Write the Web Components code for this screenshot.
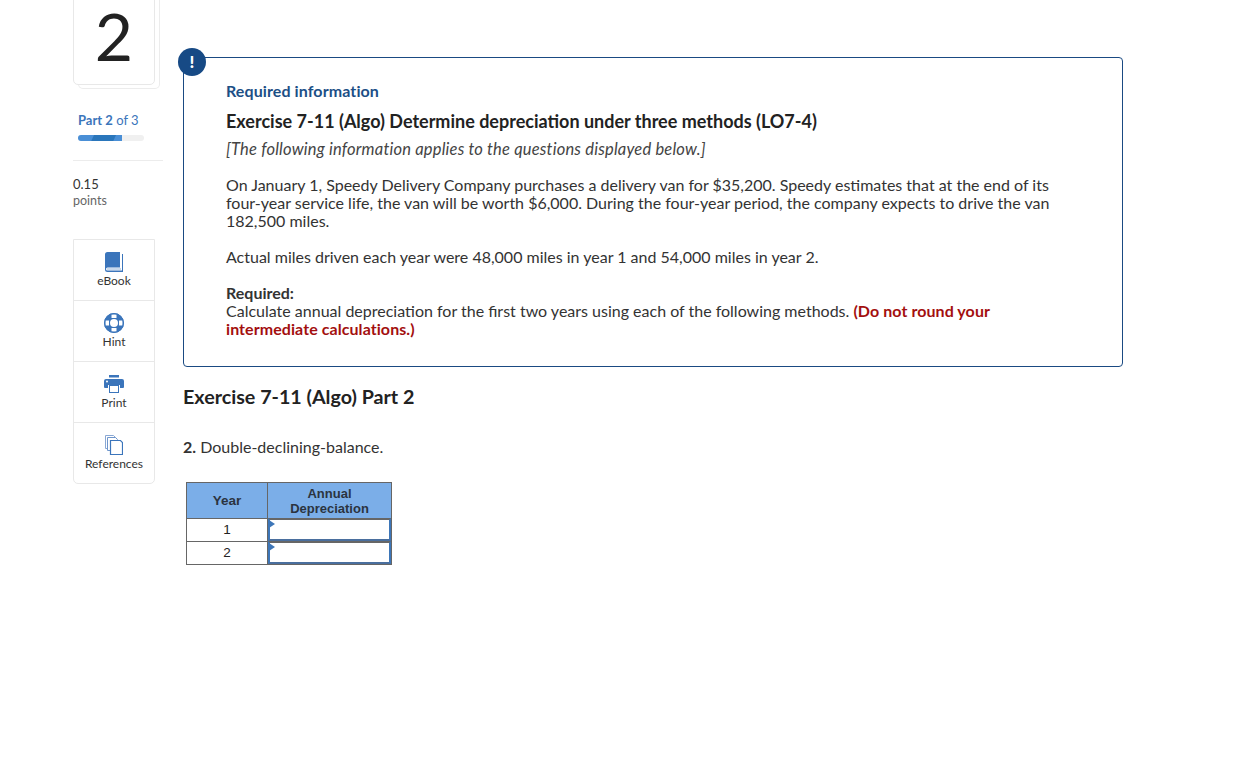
<!DOCTYPE html>
<html>
<head>
<meta charset="utf-8">
<title>Exercise 7-11</title>
<style>
    html, body { margin: 0; background: #fff; height: 100%; overflow: hidden; }
    body { font-family: Lato, "Open Sans", sans-serif; color: #222; }
    .warn { color: #a30f0f; letter-spacing: .07px; }
</style>
</head>
<body>
<quiz-page>
    <quiz-sidebar slot="side" number="2">
        <tool-item label="eBook">
            <svg width="18" height="20" viewBox="0 0 18 20"><path d="M2.500 0H15v15.500H2.500a1.500 1.500 0 0 0 0 3H17V2h1v18H2.500A2.500 2.500 0 0 1 0 17.500v-15A2.500 2.500 0 0 1 2.500 0z" fill="#3b75bb"/><path d="M2 16.500h14v1H2z" fill="#3b75bb" opacity=".55"/></svg>
        </tool-item>
        <tool-item label="Hint">
            <svg width="20" height="20" viewBox="0 0 20 20"><circle cx="10" cy="10" r="7" fill="none" stroke="#3b75bb" stroke-width="6"/><path d="M7.500 1.500h5v3.500h-5zM7.500 15h5v3.500h-5zM1.500 7.500H5v5H1.500zM15 7.500h3.500v5H15z" fill="#fff"/><circle cx="10" cy="10" r="9.500" fill="none" stroke="#3b75bb"/></svg>
        </tool-item>
        <tool-item label="Print">
            <svg width="20" height="18" viewBox="0 0 20 18"><path d="M5 0h10v2.500H5z" fill="#3b75bb"/><path d="M2 4h16a2 2 0 0 1 2 2v6a1 1 0 0 1-1 1h-3v-3H4v3H1a1 1 0 0 1-1-1V6a2 2 0 0 1 2-2z" fill="#3b75bb"/><circle cx="3" cy="6.500" r="1" fill="#fff"/><rect x="5.500" y="10.500" width="9" height="7" fill="#fff" stroke="#3b75bb"/></svg>
        </tool-item>
        <tool-item label="References">
            <svg width="18" height="20" viewBox="0 0 18 20" fill="#fff" stroke="#3b75bb"><path d="M.5.500h8l2 2v11H.5z" stroke="#8aa8d4"/><path d="M2.500 2.500h8l2 2v11h-10z" stroke="#6f96cc"/><path d="M5.500 5.500h10l2 2v12h-12z" stroke-width="1.200"/></svg>
        </tool-item>
    </quiz-sidebar>
    <info-box slot="main">
        <div slot="eyebrow">Required information</div>
        <span slot="title">Exercise 7-11 (Algo) Determine depreciation under three methods (LO7-4)</span>
        <span slot="note">[The following information applies to the questions displayed below.]</span>
        <p>On January 1, Speedy Delivery Company purchases a delivery van for $35,200. Speedy estimates that at the end of its four-year service life, the van will be worth $6,000. During the four-year period, the company expects to drive the van 182,500 miles.</p>
        <p>Actual miles driven each year were 48,000 miles in year 1 and 54,000 miles in year 2.</p>
        <p><b>Required:</b><br>Calculate annual depreciation for the first two years using each of the following methods. <b class="warn">(Do not round your<br>intermediate calculations.)</b></p>
    </info-box>
    <question-part slot="main" heading="Exercise 7-11 (Algo) Part 2">
        <span><b>2.</b> Double-declining-balance.</span>
    </question-part>
</quiz-page>

<script>
const html = String.raw;

class QuizPage extends HTMLElement {
    connectedCallback() {
        this.attachShadow({ mode: 'open' }).innerHTML = html`
            <style>
                :host { display: flex; padding-left: 73px; }
                .side { width: 90px; flex: none; }
                .main { width: 940px; margin-left: 20px; padding-top: 57px; }
            </style>
            <div class="side"><slot name="side"></slot></div>
            <div class="main"><slot name="main"></slot></div>
        `;
    }
}

class QuizSidebar extends HTMLElement {
    connectedCallback() {
        this.attachShadow({ mode: 'open' }).innerHTML = html`
            <style>
                :host { display: block; }
                /* the card is scrolled partly out of view, so it starts above the top edge */
                .num {
                    box-sizing: border-box; width: 82px; height: 95px; margin-top: -10px;
                    border: 1px solid #e8e8e8; border-radius: 0 0 5px 5px; background: #fff;
                    box-shadow: 5px 4px 0 -1px #fff, 5px 4px 0 0 #ececec;
                    font: 400 66px/90px Lato, sans-serif; color: #222; text-align: center;
                }
                .part { margin: 27px 0 0 5px; font-size: 13px; line-height: 16px; color: #3b75bb; }
                .bar { margin: 7px 0 0 5px; width: 66px; height: 6px; border-radius: 3px; background: #f0f0f0; overflow: hidden; }
                .bar i {
                    display: block; width: 44px; height: 6px;
                    background: linear-gradient(115deg, #4a8fd6 0 14px, #2a76bb 15px 34px, #4a8fd6 35px);
                }
                hr { margin: 19px 0 0; border: 0; border-top: 1px solid #ececec; }
                .pts { margin-top: 15px; font-size: 13px; line-height: 17px; color: #333; }
                .pts small { display: block; font-size: 12.500px; line-height: 16px; color: #666; }
                .tools { margin-top: 30px; width: 82px; box-sizing: border-box; border: 1px solid #e8e8e8; border-radius: 0 0 5px 5px; }
            </style>
            <div class="num">${this.getAttribute('number')}</div>
            <div class="part"><b>Part 2</b> of 3</div>
            <div class="bar"><i></i></div>
            <hr>
            <div class="pts">0.15<small>points</small></div>
            <div class="tools"><slot></slot></div>
        `;
    }
}

class ToolItem extends HTMLElement {
    connectedCallback() {
        this.attachShadow({ mode: 'open' }).innerHTML = html`
            <style>
                :host { display: block; box-sizing: border-box; height: 61px; padding-top: 11px; text-align: center; border-top: 1px solid #e8e8e8; }
                :host(:first-child) { border-top: 0; height: 60px; }
                .icon { height: 22px; display: flex; justify-content: center; align-items: center; }
                .label { margin-top: 0; font-size: 12px; line-height: 16px; color: #333; }
            </style>
            <div class="icon"><slot></slot></div>
            <div class="label">${this.getAttribute('label')}</div>
        `;
    }
}

class InfoBox extends HTMLElement {
    connectedCallback() {
        this.attachShadow({ mode: 'open' }).innerHTML = html`
            <style>
                :host {
                    display: block; position: relative; box-sizing: border-box; height: 310px;
                    border: 1px solid #1a4a82; border-radius: 4px; padding: 24px 42px 0;
                    font-size: 16px; line-height: 18px; color: #333;
                }
                .badge {
                    position: absolute; left: -6px; top: -10px; width: 28px; height: 28px; border-radius: 50%;
                    background: #174a85; color: #fff; font: 900 17px/28px Lato, sans-serif; text-align: center;
                }
                .eyebrow { font-weight: 700; color: #1c4f86; letter-spacing: .1px; }
                .title { margin-top: 11px; font-size: 18px; font-weight: 700; line-height: 20px; color: #222; }
                .note { margin: 9px 0 18px; font-style: italic; font-size: 16.500px; letter-spacing: .2px; color: #444; }
                ::slotted(p) { margin: 0 0 18px; }
            </style>
            <div class="badge">!</div>
            <div class="eyebrow"><slot name="eyebrow"></slot></div>
            <div class="title"><slot name="title"></slot></div>
            <div class="note"><slot name="note"></slot></div>
            <slot></slot>
        `;
    }
}

class QuestionPart extends HTMLElement {
    connectedCallback() {
        this.attachShadow({ mode: 'open' }).innerHTML = html`
            <style>
                :host { display: block; }
                h2 { margin: 18px 0 0; font-size: 19.700px; line-height: 24px; font-weight: 700; color: #222; }
                .q { margin-top: 29px; font-size: 16px; line-height: 18px; color: #333; }
                depreciation-table { margin: 26px 0 0 3px; }
            </style>
            <h2>${this.getAttribute('heading')}</h2>
            <div class="q"><slot></slot></div>
            <depreciation-table></depreciation-table>
        `;
    }
}

class DepreciationTable extends HTMLElement {
    connectedCallback() {
        this.attachShadow({ mode: 'open' }).innerHTML = html`
            <style>
                :host { display: block; font: 13px/15px "Liberation Sans", Arial, sans-serif; color: #222; }
                .grid {
                    display: grid; grid-template-columns: 81px 123px; grid-template-rows: 35px 23px 23px;
                    width: 206px; box-sizing: border-box; border: 1px solid #666;
                }
                .grid > div { display: flex; align-items: center; justify-content: center; text-align: center; box-sizing: border-box; }
                .hd { background: #7baee8; font-weight: 700; color: #2b3440; }
                .hd.a, .yr { border-right: 1px solid #666; }
                .hd.a { padding-bottom: 1px; font-size: 13.500px; }
                .yr { border-top: 1px solid #666; padding-bottom: 1px; font-size: 13.500px; }
                .hd.b { padding-top: 1px; }
                .cell { position: relative; border: 2px solid #3d76b8; border-top-color: #666; border-bottom-color: #4a6f9e; }
                .cell::before {
                    content: ''; position: absolute; left: -1px; top: 0; border-left: 6px solid #3d76b8;
                    border-top: 4px solid transparent; border-bottom: 4px solid transparent;
                }
            </style>
            <div class="grid">
                <div class="hd a">Year</div><div class="hd b">Annual<br>Depreciation</div>
                <div class="yr">1</div><div class="cell"></div>
                <div class="yr">2</div><div class="cell"></div>
            </div>
        `;
    }
}

customElements.define('quiz-page', QuizPage);
customElements.define('quiz-sidebar', QuizSidebar);
customElements.define('tool-item', ToolItem);
customElements.define('info-box', InfoBox);
customElements.define('question-part', QuestionPart);
customElements.define('depreciation-table', DepreciationTable);
</script>
</body>
</html>
